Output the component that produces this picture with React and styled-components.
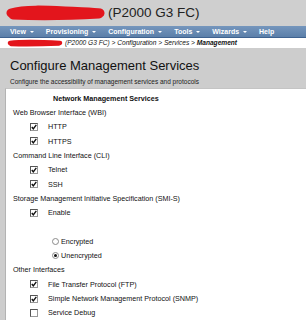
import React from "react";
import styled, { createGlobalStyle } from "styled-components";

const Global = createGlobalStyle`
  html, body { margin: 0; padding: 0; background: #cdcdcd; }
  body { font-family: "Liberation Sans", Arial, sans-serif; color: #111; }
`;

const Page = styled.div`
  width: 306px;
  height: 320px;
  overflow: hidden;
  background: #cdcdcd;
  display: flex;
  flex-direction: column;
`;

const Header = styled.header`
  height: 28px;
  display: flex;
  align-items: center;
  padding-left: 5px;
  box-sizing: border-box;
  background: #cfcfcf;
`;

const HeaderTitle = styled.h1`
  margin: 0 0 0 3px;
  font-size: 13.5px;
  font-weight: normal;
  color: #222;
  line-height: 16px;
`;

const MenuBar = styled.nav`
  height: 11px;
  display: flex;
  align-items: center;
  gap: 12px;
  padding-left: 10px;
  background: linear-gradient(#7596bd, #5b7fa9);
  border-bottom: 1px solid #3e6290;
`;

const MenuItem = styled.span`
  display: inline-flex;
  align-items: center;
  gap: 4px;
  font-size: 7px;
  font-weight: bold;
  color: #fff;
  line-height: 10px;
`;

const Caret = styled.span`
  width: 0;
  height: 0;
  border-left: 2px solid transparent;
  border-right: 2px solid transparent;
  border-top: 2.5px solid #fff;
  margin-top: 1px;
`;

const Breadcrumb = styled.div`
  height: 11px;
  display: flex;
  align-items: center;
  padding-left: 7px;
  background: #fff;
  gap: 2px;
`;

const Crumbs = styled.span`
  font-size: 6.6px;
  font-style: italic;
  color: #111;
  white-space: nowrap;
  line-height: 10px;
`;

const Current = styled.b`
  font-weight: bold;
`;

const Content = styled.main`
  flex: 1;
  display: flex;
  flex-direction: column;
  padding-top: 9px;
`;

const PageTitle = styled.h2`
  margin: 0 0 0 10px;
  font-size: 13px;
  font-weight: normal;
  line-height: 17px;
  color: #111;
`;

const Subtitle = styled.p`
  margin: 4px 0 0 10px;
  font-size: 6.5px;
  line-height: 8px;
  color: #222;
`;

const Panel = styled.section`
  margin: 2px 0 0 5px;
  flex: 1;
  background: #fff;
  border-left: 1px solid #b3b3b3;
  border-top: 1px solid #c4c4c4;
  padding-top: 2px;
  display: flex;
  flex-direction: column;
`;

const Row = styled.div`
  height: 14.3px;
  display: flex;
  align-items: center;
  padding-left: ${(p) => p.$indent || 0}px;
  font-size: 7.2px;
  color: #111;
  white-space: nowrap;
`;

const SectionHead = styled(Row)`
  font-weight: bold;
  padding-left: 47px;
`;

const Spacer = styled.div`
  height: 14.3px;
`;

const Box = styled.span`
  width: 8px;
  height: 8px;
  box-sizing: border-box;
  border: 1px solid #555;
  border-right-color: #999;
  border-bottom-color: #999;
  margin-right: 10px;
  display: inline-flex;
  align-items: center;
  justify-content: center;
  background: #fff;
`;

const Radio = styled.span`
  width: 7px;
  height: 7px;
  box-sizing: border-box;
  border-radius: 50%;
  border: 1px solid #8a8a8a;
  margin-right: 2px;
  display: inline-flex;
  align-items: center;
  justify-content: center;
  &::after {
    content: "";
    width: 3px;
    height: 3px;
    border-radius: 50%;
    background: ${(p) => (p.$on ? "#111" : "transparent")};
  }
`;

const Redact = ({ w, h, sw, d }) => (
  <svg width={w} height={h} viewBox={`0 0 ${w} ${h}`} style={{ flex: "none" }}>
    <path d={d} fill="none" stroke="#e3151c" strokeWidth={sw} strokeLinecap="round" strokeLinejoin="round" />
  </svg>
);

const Check = ({ checked, label }) => (
  <Row $indent={24}>
    <Box>
      {checked && (
        <svg width="6" height="6" viewBox="0 0 6 6">
          <path d="M0.8 3 L2.3 4.8 L5.3 0.8" fill="none" stroke="#111" strokeWidth="1.4" />
        </svg>
      )}
    </Box>
    {label}
  </Row>
);

const Opt = ({ on, label }) => (
  <Row $indent={46}>
    <Radio $on={on} />
    {label}
  </Row>
);

const menu = [
  ["View", true],
  ["Provisioning", true],
  ["Configuration", true],
  ["Tools", true],
  ["Wizards", true],
  ["Help", false],
];

export default function App() {
  return (
    <Page>
      <Global />
      <Header>
        <Redact
          w={100}
          h={18}
          sw={9}
          d="M6 9 C20 5, 40 6, 60 7 S 90 8, 95 9 M8 11 C30 12, 60 12, 94 10"
        />
        <HeaderTitle>(P2000 G3 FC)</HeaderTitle>
      </Header>
      <MenuBar>
        {menu.map(([t, c]) => (
          <MenuItem key={t}>
            {t}
            {c && <Caret />}
          </MenuItem>
        ))}
      </MenuBar>
      <Breadcrumb>
        <Redact w={56} h={8} sw={4.5} d="M3 4 C15 2.5, 35 3, 53 4 M4 5 C20 5.5, 40 5, 52 4.5" />
        <Crumbs>
          (P2000 G3 FC) &gt; Configuration &gt; Services &gt; <Current>Management</Current>
        </Crumbs>
      </Breadcrumb>
      <Content>
        <PageTitle>Configure Management Services</PageTitle>
        <Subtitle>Configure the accessibility of management services and protocols</Subtitle>
        <Panel>
          <SectionHead>Network Management Services</SectionHead>
          <Row $indent={7}>Web Browser Interface (WBI)</Row>
          <Check checked label="HTTP" />
          <Check checked label="HTTPS" />
          <Row $indent={7}>Command Line Interface (CLI)</Row>
          <Check checked label="Telnet" />
          <Check checked label="SSH" />
          <Row $indent={7}>Storage Management Initiative Specification (SMI-S)</Row>
          <Check checked label="Enable" />
          <Spacer />
          <Opt label="Encrypted" />
          <Opt on label="Unencrypted" />
          <Row $indent={7}>Other Interfaces</Row>
          <Check checked label="File Transfer Protocol (FTP)" />
          <Check checked label="Simple Network Management Protocol (SNMP)" />
          <Check label="Service Debug" />
        </Panel>
      </Content>
    </Page>
  );
}
